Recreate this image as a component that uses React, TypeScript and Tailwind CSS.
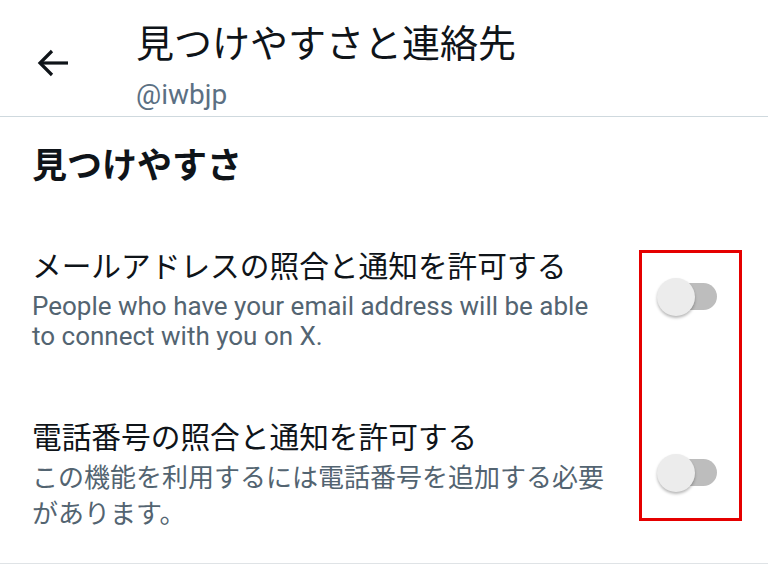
import React from "react";

const FONT = "font-['Roboto','Noto_Sans_CJK_JP',sans-serif]";

function BackArrow() {
  return (
    <svg width="32" height="28" viewBox="0 0 32 28" fill="none" aria-hidden="true">
      <path d="M31 14H3" stroke="#0f1419" strokeWidth="3.2" />
      <path d="M15 2L3 14l12 12" stroke="#0f1419" strokeWidth="3.2" strokeLinejoin="miter" />
    </svg>
  );
}

function Toggle() {
  return (
    <div className="relative mb-[6px] h-[38px] w-[60px] shrink-0">
      <div className="absolute right-0 top-[5px] h-[27px] w-[50px] rounded-full bg-[#bdbdbd]" />
      <div className="absolute left-0 top-0 h-[38px] w-[38px] rounded-full bg-[#ececec] shadow-[0_2px_3px_rgba(0,0,0,0.28)]" />
    </div>
  );
}

function Row({
  title,
  desc,
  descClass,
}: {
  title: string;
  desc: string;
  descClass: string;
}) {
  return (
    <div className="flex items-center pl-[32px] pr-[51px]">
      <div className="w-[580px]">
        <div className="text-[29.7px] leading-[36px] text-[#0f1419]">{title}</div>
        <div className={`text-[26px] text-[#536471] ${descClass}`}>{desc}</div>
      </div>
      <div className="ml-auto">
        <Toggle />
      </div>
    </div>
  );
}

export default function App() {
  return (
    <div className={`relative h-[582px] w-[768px] overflow-hidden bg-white ${FONT}`}>
      <header className="flex h-[117px] border-b border-[#cfd9de]">
        <div className="w-[136px] shrink-0 pl-[37px] pt-[49px]">
          <BackArrow />
        </div>
        <div className="pt-[22px]">
          <h1 className="text-[38px] leading-[44px] text-[#0f1419]">見つけやすさと連絡先</h1>
          <p className="mt-[13px] text-[28px] leading-[32px] text-[#5b7083]">@iwbjp</p>
        </div>
      </header>

      <section className="h-[447px] border-b border-[#dfe3e6]">
        <h2 className="px-[32px] pt-[28px] text-[35px] font-bold leading-[44px] text-[#0f1419]">
          見つけやすさ
        </h2>
        <div className="mt-[60px] flex flex-col gap-[69px]">
          <Row
            title="メールアドレスの照合と通知を許可する"
            desc="People who have your email address will be able to connect with you on X."
            descClass="mt-[6px] leading-[30px]"
          />
          <Row
            title="電話番号の照合と通知を許可する"
            desc="この機能を利用するには電話番号を追加する必要があります。"
            descClass="mt-[4px] leading-[36px]"
          />
        </div>
      </section>

      {/* annotation box around the two switches */}
      <div className="pointer-events-none absolute left-[639px] top-[250px] h-[271px] w-[103px] border-[3px] border-[#e50000]" />
    </div>
  );
}
